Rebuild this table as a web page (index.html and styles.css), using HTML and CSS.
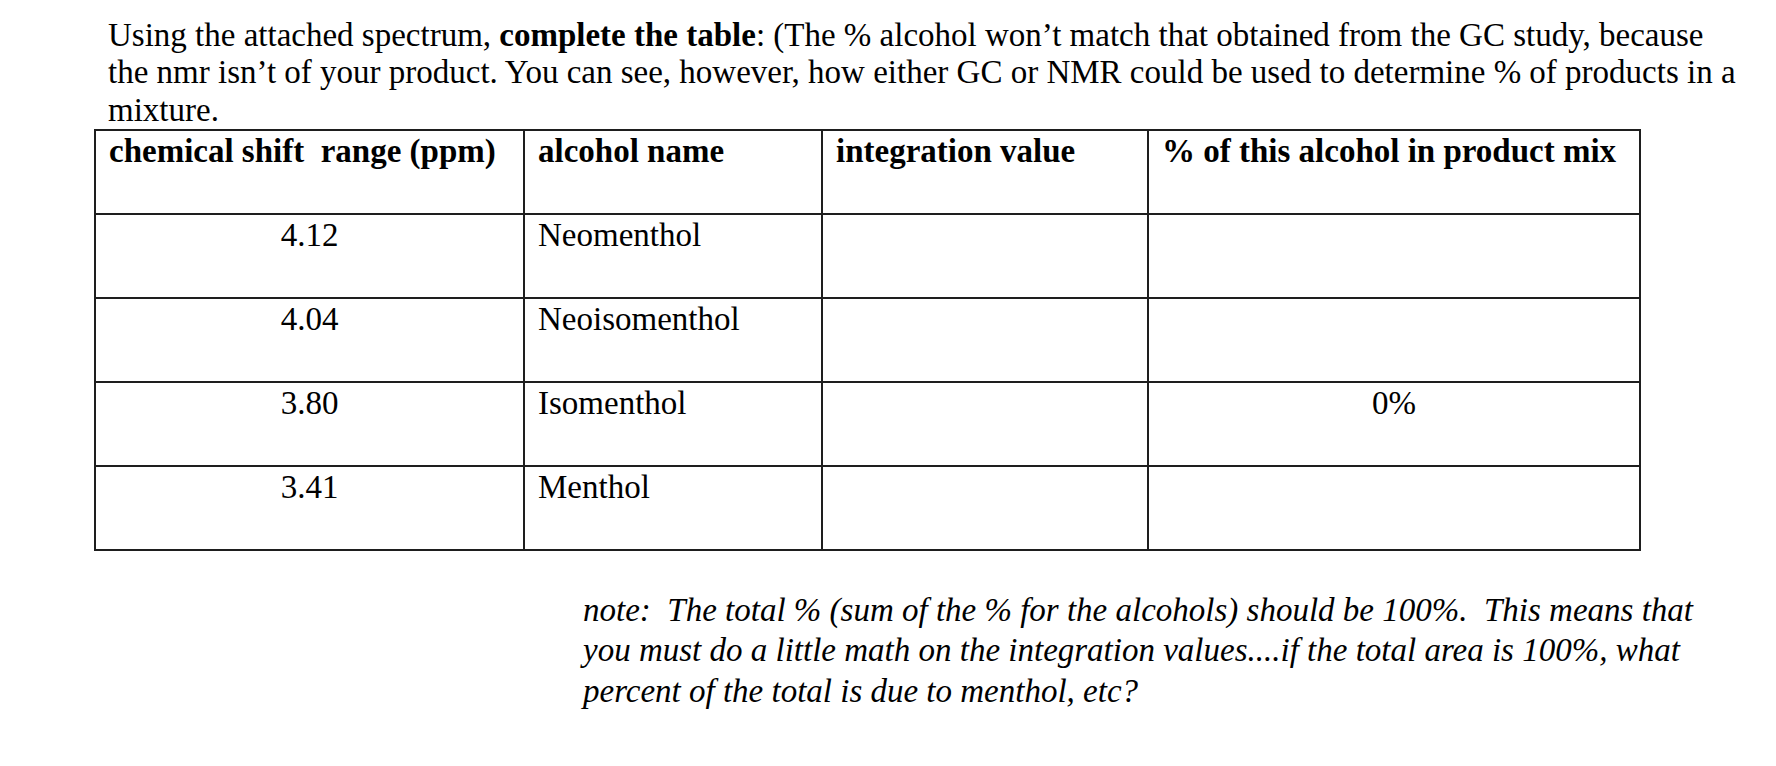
FILE: index.html
```html
<!DOCTYPE html>
<html lang="en">
<head>
<meta charset="utf-8">
<title>Complete the table</title>
<link rel="stylesheet" href="styles.css">
</head>
<body>
<main class="page">
  <p class="intro">Using the attached spectrum, <b>complete the table</b>: (The % alcohol won’t match that obtained from the GC study, because<br>the nmr isn’t of your product. You can see, however, how either GC or NMR could be used to determine % of products in a<br>mixture.</p>
  <table class="data">
    <colgroup>
      <col class="c1"><col class="c2"><col class="c3"><col class="c4">
    </colgroup>
    <thead>
      <tr>
        <th>chemical shift&nbsp; range (ppm)</th>
        <th>alcohol name</th>
        <th>integration value</th>
        <th>% of this alcohol in product mix</th>
      </tr>
    </thead>
    <tbody>
      <tr><td class="center">4.12</td><td>Neomenthol</td><td></td><td></td></tr>
      <tr><td class="center">4.04</td><td>Neoisomenthol</td><td></td><td></td></tr>
      <tr><td class="center">3.80</td><td>Isomenthol</td><td></td><td class="center">0%</td></tr>
      <tr><td class="center">3.41</td><td>Menthol</td><td></td><td></td></tr>
    </tbody>
  </table>
  <p class="note">note:&nbsp; The total % (sum of the % for the alcohols) should be 100%.&nbsp; This means that<br>you must do a little math on the integration values....if the total area is 100%, what<br>percent of the total is due to menthol, etc?</p>
</main>
</body>
</html>
```

FILE: styles.css
```css
html, body {
  margin: 0;
  padding: 0;
  background: #ffffff;
  color: #000000;
}

.page {
  padding: 17px 0 0 94px;
  font-family: "Liberation Serif", "Times New Roman", serif;
}

.intro {
  margin: 0 0 0 14px;
  font-size: 33px;
  line-height: 37.3px;
  white-space: nowrap;
}

.data {
  border-collapse: collapse;
  table-layout: fixed;
  width: 1547px;
  font-size: 33px;
  line-height: 37px;
}

.data .c1 { width: 429px; }
.data .c2 { width: 298px; }
.data .c3 { width: 326px; }
.data .c4 { width: 492px; }

.data th,
.data td {
  border: 2px solid #1e1e1e;
  height: 84px;
  box-sizing: border-box;
  padding: 2px 12px 0 13px;
  vertical-align: top;
  text-align: left;
  white-space: nowrap;
}

.data th {
  font-weight: bold;
}

.data td.center {
  text-align: center;
  padding-left: 0;
  padding-right: 0;
}

.note {
  margin: 39px 0 0 489px;
  font-size: 33px;
  line-height: 40.5px;
  font-style: italic;
  white-space: nowrap;
}
```
